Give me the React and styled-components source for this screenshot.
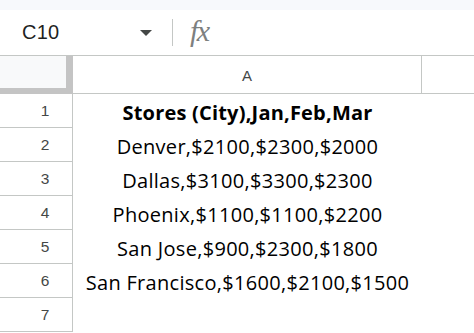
import React from 'react';
import styled, {createGlobalStyle} from "styled-components";

const GlobalStyle = createGlobalStyle`
  html, body {
    margin: 0;
    padding: 0;
    background: #ffffff;
  }
  body {
    font-family: "Liberation Sans", Arial, sans-serif;
  }
`

const rows = [
    {text: 'Stores (City),Jan,Feb,Mar', bold: true},
    {text: 'Denver,$2100,$2300,$2000'},
    {text: 'Dallas,$3100,$3300,$2300'},
    {text: 'Phoenix,$1100,$1100,$2200'},
    {text: 'San Jose,$900,$2300,$1800'},
    {text: 'San Francisco,$1600,$2100,$1500'},
    {text: ''},
]

const Page = styled.div`
  width: 474px;
  height: 333px;
  overflow: hidden;
  background: #fff;
`

const TopStrip = styled.div`
  height: 10px;
  background: #f7f9fc;
`

const FormulaBar = styled.div`
  height: 45px;
  display: flex;
  align-items: center;
  border-bottom: 1px solid #c4c7c5;
`

const NameBox = styled.div`
  width: 118px;
  padding-left: 22px;
  font-size: 20px;
  color: #1f1f1f;
  letter-spacing: 0.2px;
`

const Caret = styled.div`
  width: 0;
  height: 0;
  border-left: 6px solid transparent;
  border-right: 6px solid transparent;
  border-top: 6px solid #444746;
`

const Divider = styled.div`
  width: 1px;
  height: 27px;
  background: #c4c7c5;
  margin-left: 20px;
`

const Fx = styled.div`
  margin-left: 17px;
  font-family: "Liberation Serif", "DejaVu Serif", serif;
  font-style: italic;
  font-size: 30px;
  color: #7d807f;
  letter-spacing: -1.5px;
  margin-top: -4px;
`

const Grid = styled.div`
  display: grid;
  grid-template-columns: 73px 349px 1fr;
  grid-template-rows: 38px repeat(7, 34px);
`

const Corner = styled.div`
  background: #f8f9fa;
  border-right: 7px solid #c4c4c4;
  border-bottom: 6px solid #c4c4c4;
`

const ColHead = styled.div`
  display: flex;
  align-items: center;
  justify-content: center;
  border-right: ${p => p.$last ? 'none' : '1px solid #c4c7c5'};
  border-bottom: 1px solid #c4c7c5;
  font-size: 15px;
  color: #444746;
  padding-top: 1px;
`

const RowHead = styled.div`
  display: flex;
  align-items: center;
  justify-content: center;
  border-right: 1px solid #c4c7c5;
  border-bottom: 1px solid #c4c7c5;
  padding-left: 18px;
  font-size: 15.5px;
  color: #444746;
`

const Cell = styled.div`
  display: flex;
  align-items: center;
  justify-content: center;
  white-space: nowrap;
  font-family: "Open Sans", "Noto Sans", sans-serif;
  font-size: 20px;
  font-weight: ${p => p.$bold ? 700 : 400};
  letter-spacing: ${p => p.$bold ? '0.2px' : '0.3px'};
  color: #000;
  padding-top: 2px;
`

const Blank = styled.div``

function App() {
    return (
        <Page>
            <GlobalStyle/>
            <TopStrip/>
            <FormulaBar>
                <NameBox>C10</NameBox>
                <Caret/>
                <Divider/>
                <Fx>fx</Fx>
            </FormulaBar>
            <Grid>
                <Corner/>
                <ColHead>A</ColHead>
                <ColHead $last/>
                {rows.map((row, i) => (
                    <React.Fragment key={i}>
                        <RowHead>{i + 1}</RowHead>
                        <Cell $bold={row.bold}>{row.text}</Cell>
                        <Blank/>
                    </React.Fragment>
                ))}
            </Grid>
        </Page>
    )
}

export default App;
